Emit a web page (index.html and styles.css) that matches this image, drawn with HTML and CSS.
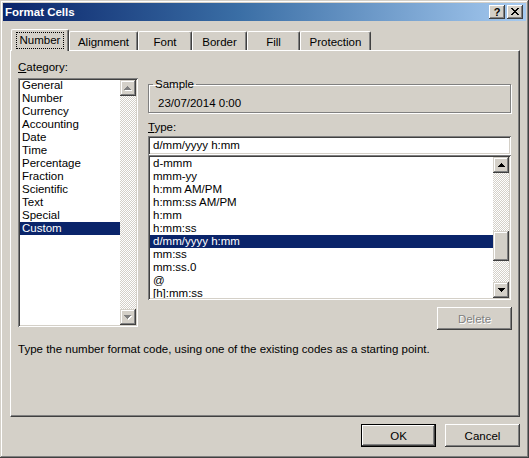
FILE: index.html
```html
<!DOCTYPE html>
<html>
<head>
<meta charset="utf-8">
<title>Format Cells</title>
<link rel="stylesheet" href="styles.css">
</head>
<body>
<div class="window">
  <div class="titlebar">
    <span class="title">Format Cells</span>
    <div class="caption-btns">
      <span class="cbtn help">?</span>
      <span class="cbtn close"><svg width="8" height="7" viewBox="0 0 8 7" shape-rendering="crispEdges"><path d="M0 0h2v1H0z M6 0h2v1H6z M1 1h2v1H1z M5 1h2v1H5z M2 2h4v1H2z M3 3h2v1H3z M2 4h4v1H2z M1 5h2v1H1z M5 5h2v1H5z M0 6h2v1H0z M6 6h2v1H6z"/></svg></span>
    </div>
  </div>
  <div class="client">
    <div class="tabs">
      <div class="tab sel w-number"><span class="focus">Number</span></div>
      <div class="tab w-align">Alignment</div>
      <div class="tab w-font">Font</div>
      <div class="tab w-border">Border</div>
      <div class="tab w-fill">Fill</div>
      <div class="tab w-prot">Protection</div>
    </div>
    <div class="panel">
      <div class="cols">
        <div class="left">
          <div class="label"><u>C</u>ategory:</div>
          <div class="listbox cat">
            <div class="items">
              <div class="item">General</div>
              <div class="item">Number</div>
              <div class="item">Currency</div>
              <div class="item">Accounting</div>
              <div class="item">Date</div>
              <div class="item">Time</div>
              <div class="item">Percentage</div>
              <div class="item">Fraction</div>
              <div class="item">Scientific</div>
              <div class="item">Text</div>
              <div class="item">Special</div>
              <div class="item selected">Custom</div>
            </div>
            <div class="vscroll">
              <div class="sbtn"><svg width="8" height="5" viewBox="0 0 8 5" shape-rendering="crispEdges"><path class="hl" d="M4 1h1v1h1v1h1v1h1v1H1V4h1V3h1V2h1z"/><path class="gr" d="M3 0h1v1h1v1h1v1h1v1H0V3h1V2h1V1h1z"/></svg></div>
              <div class="track"></div>
              <div class="sbtn"><svg width="8" height="5" viewBox="0 0 8 5" shape-rendering="crispEdges"><path class="hl" d="M1 1h7v1H7v1H6v1H5v1H4V4H3V3H2V2H1z"/><path class="gr" d="M0 0h7v1H6v1H5v1H4v1H3V3H2V2H1V1H0z"/></svg></div>
            </div>
          </div>
        </div>
        <div class="right">
          <fieldset class="group">
            <legend>Sample</legend>
            <div class="sample">23/07/2014 0:00</div>
          </fieldset>
          <div class="label type-label"><u>T</u>ype:</div>
          <div class="input">d/mm/yyyy h:mm</div>
          <div class="listbox types">
            <div class="items">
              <div class="item">d-mmm</div>
              <div class="item">mmm-yy</div>
              <div class="item">h:mm AM/PM</div>
              <div class="item">h:mm:ss AM/PM</div>
              <div class="item">h:mm</div>
              <div class="item">h:mm:ss</div>
              <div class="item selected">d/mm/yyyy h:mm</div>
              <div class="item">mm:ss</div>
              <div class="item">mm:ss.0</div>
              <div class="item">@</div>
              <div class="item">[h]:mm:ss</div>
            </div>
            <div class="vscroll">
              <div class="sbtn"><svg width="7" height="4" viewBox="0 0 7 4" shape-rendering="crispEdges"><path d="M3 0h1v1h1v1h1v1h1v1H0V3h1V2h1V1h1z"/></svg></div>
              <div class="track"><div class="thumb"></div></div>
              <div class="sbtn"><svg width="7" height="4" viewBox="0 0 7 4" shape-rendering="crispEdges"><path d="M0 0h7v1H6v1H5v1H4v1H3V3H2V2H1V1H0z"/></svg></div>
            </div>
          </div>
          <div class="btn-row">
            <button class="btn disabled">Delete</button>
          </div>
        </div>
      </div>
      <p class="desc">Type the number format code, using one of the existing codes as a starting point.</p>
    </div>
    <div class="footer">
      <button class="btn default">OK</button>
      <button class="btn">Cancel</button>
    </div>
  </div>
</div>
</body>
</html>
```

FILE: styles.css
```css
* { box-sizing: border-box; }

html, body {
  margin: 0;
  padding: 0;
  background: #d4d0c8;
}

body {
  font-family: "Liberation Sans", Arial, sans-serif;
  font-size: 11.5px;
  color: #000;
}

.window {
  width: 529px;
  height: 458px;
  padding: 3px;
  background: #d4d0c8;
  box-shadow: inset -1px -1px #404040, inset 1px 1px #d4d0c8, inset -2px -2px #808080, inset 2px 2px #fff;
  display: flex;
  flex-direction: column;
}

/* Title bar */
.titlebar {
  height: 18px;
  background: linear-gradient(to right, #0a246a 0%, #3a6ea5 45%, #a6caf0 100%);
  display: flex;
  align-items: center;
  justify-content: space-between;
  padding: 0 3px 0 2px;
}

.title {
  color: #fff;
  font-weight: bold;
  font-size: 11.5px;
  line-height: 14px;
}

.caption-btns {
  display: flex;
  gap: 2px;
}

.cbtn {
  width: 16px;
  height: 14px;
  background: #d4d0c8;
  box-shadow: inset -1px -1px #404040, inset 1px 1px #fff, inset -2px -2px #808080, inset 2px 2px #d4d0c8;
  display: flex;
  align-items: center;
  justify-content: center;
}

.cbtn.help {
  font-weight: bold;
  font-size: 11px;
  line-height: 14px;
  padding-bottom: 1px;
}

.cbtn.close svg {
  fill: #000;
  margin-top: -1px;
}

/* Client area */
.client {
  padding: 8px 0 0 7px;
  display: flex;
  flex-direction: column;
}

.tabs {
  display: flex;
  align-items: flex-end;
  height: 21px;
  padding-left: 1px;
}

.tab {
  height: 19px;
  background: #d4d0c8;
  border-top: 1px solid #fff;
  border-left: 1px solid #fff;
  border-right: 1px solid #404040;
  box-shadow: inset -1px 0 #808080;
  border-radius: 2px 2px 0 0;
  display: flex;
  align-items: center;
  justify-content: center;
  padding-top: 2px;
  line-height: 13px;
}

.tab.sel {
  height: 22px;
  margin-bottom: -1px;
  position: relative;
  z-index: 1;
  padding-top: 0;
}

.focus {
  border: 1px dotted #000;
  padding: 1px 3px 1px 3px;
}

.w-number { width: 58px; }
.w-align { width: 69px; }
.w-font { width: 54px; }
.w-border { width: 55px; }
.w-fill { width: 53px; }
.w-prot { width: 71px; }

/* Panel */
.panel {
  width: 510px;
  height: 367px;
  border-top: 1px solid #fff;
  border-left: 1px solid #fff;
  border-right: 1px solid #404040;
  border-bottom: 1px solid #404040;
  box-shadow: inset -1px -1px #808080;
  padding: 9px 0 0 7px;
}

.cols {
  display: flex;
  gap: 10px;
  align-items: flex-start;
}

.left {
  width: 120px;
  display: flex;
  flex-direction: column;
}

.right {
  width: 363px;
  display: flex;
  flex-direction: column;
  padding-top: 17px;
}

.label {
  line-height: 14px;
  height: 14px;
}

.left .label {
  margin-bottom: 4px;
}

/* List boxes */
.listbox {
  display: flex;
  background: #fff;
  box-shadow: inset 1px 1px #808080, inset -1px -1px #fff, inset 2px 2px #404040, inset -2px -2px #d4d0c8;
  padding: 2px;
  overflow: hidden;
}

.listbox.cat {
  height: 249px;
}

.listbox.cat .items {
  margin-top: -1px;
}

.listbox.types {
  height: 145px;
}

.items {
  flex: 1;
  overflow: hidden;
  min-width: 0;
}

.item {
  height: 13px;
  line-height: 13px;
  padding-left: 2px;
  white-space: nowrap;
}

.types .item {
  padding-left: 3px;
}

.item.selected {
  background: #0a246a;
  color: #fff;
}

.vscroll {
  width: 16px;
  display: flex;
  flex-direction: column;
}

.sbtn {
  width: 16px;
  height: 16px;
  flex: none;
  background: #d4d0c8;
  box-shadow: inset -1px -1px #404040, inset 1px 1px #d4d0c8, inset -2px -2px #808080, inset 2px 2px #fff;
  display: flex;
  align-items: center;
  justify-content: center;
}

.sbtn svg {
  fill: #000;
}

.sbtn .hl { fill: #fff; }
.sbtn .gr { fill: #808080; }

.track {
  flex: 1;
  background-color: #fff;
  background-image: repeating-conic-gradient(#d4d0c8 0 25%, #fff 0 50%);
  background-size: 2px 2px;
}

.thumb {
  width: 16px;
  height: 30px;
  margin-top: 58px;
  background: #d4d0c8;
  box-shadow: inset -1px -1px #404040, inset 1px 1px #d4d0c8, inset -2px -2px #808080, inset 2px 2px #fff;
}

/* Group box */
.group {
  margin: 0;
  padding: 5px 4px 2px 4px;
  border: 1px solid #808080;
  box-shadow: inset 1px 1px #fff, 1px 1px #fff;
  min-width: 0;
}

.group legend {
  padding: 0 2px;
  line-height: 14px;
  height: 14px;
}

.sample {
  line-height: 14px;
  padding-left: 5px;
}

.type-label {
  margin-top: 7px;
}

.input {
  margin-top: 2px;
  height: 19px;
  background: #fff;
  box-shadow: inset 1px 1px #808080, inset -1px -1px #fff, inset 2px 2px #404040, inset -2px -2px #d4d0c8;
  padding: 2px 5px 0 5px;
  line-height: 15px;
}

.btn-row {
  display: flex;
  justify-content: flex-end;
  margin-top: 7px;
  margin-right: -1px;
}

/* Buttons */
.btn {
  width: 75px;
  height: 23px;
  border: none;
  margin: 0;
  padding: 0;
  background: #d4d0c8;
  font-family: inherit;
  font-size: 11.5px;
  color: #000;
  box-shadow: inset -1px -1px #404040, inset 1px 1px #fff, inset -2px -2px #808080, inset 2px 2px #d4d0c8;
}

.btn.disabled {
  color: #808080;
  text-shadow: 1px 1px #fff;
}

.btn.default {
  border: 1px solid #000;
  box-shadow: inset -1px -1px #404040, inset 1px 1px #fff, inset -2px -2px #808080, inset 2px 2px #d4d0c8;
}

.desc {
  margin: 12px 0 0 0;
  line-height: 14px;
}

.footer {
  width: 510px;
  display: flex;
  justify-content: flex-end;
  gap: 9px;
  margin-top: 7px;
}
```
